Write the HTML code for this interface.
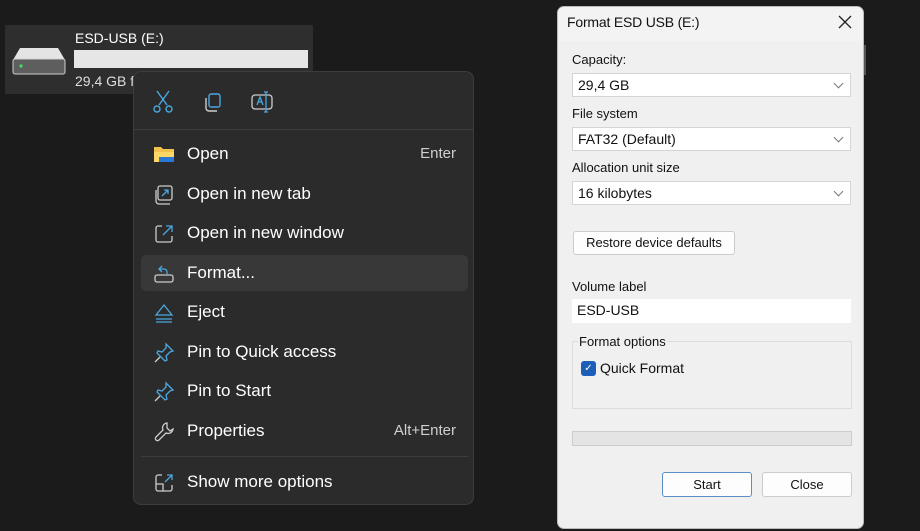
<!DOCTYPE html>
<html><head><meta charset="utf-8"><style>
*{margin:0;padding:0;box-sizing:border-box}
body{width:920px;height:531px;background:#1b1b1b;font-family:"Segoe UI","Liberation Sans",sans-serif;position:relative;overflow:hidden}
.abs{position:absolute}
.tile{left:5px;top:25px;width:308px;height:69px;background:#2e2e2e}
.menu{left:133px;top:71px;width:341px;height:434px;background:#2b2b2b;border:1px solid #3c3c3c;border-radius:8px}
.item{position:absolute;left:7px;width:327px;height:36px;color:#fff;font-size:17px;line-height:36px}
.item .t{position:absolute;left:46px}
.item .k{position:absolute;right:12px;font-size:15px;color:#cfcfcf}
.item svg{position:absolute;left:12px;top:8px}
.dlg{left:557px;top:6px;width:307px;height:523px;background:#f0f0f0;border:1px solid #bbb;border-radius:7px;overflow:hidden;font-size:13px;color:#111}
.lbl{position:absolute;left:14px;font-size:13px}
.sel{position:absolute;left:14px;width:279px;height:24px;background:#fff;border:1px solid #d5d5d5;font-size:14px;line-height:22px;padding-left:5px}
.sel:after{content:"";position:absolute;right:8px;top:6px;width:6px;height:6px;border-right:1px solid #777;border-bottom:1px solid #777;transform:rotate(45deg)}
.btn{position:absolute;background:#fdfdfd;border:1px solid #ccc;border-radius:3px;text-align:center;font-size:13px}
</style></head><body>
<div class="abs tile"></div>
<svg class="abs" style="left:11px;top:46px" width="56" height="32"><path d="M9 2h38l7 12H2z" fill="#e4e4e4"/><rect x="2" y="13" width="52" height="15" rx="2" fill="#5e5e5e" stroke="#cfcfcf"/><circle cx="10" cy="20" r="1.6" fill="#3ce05a"/></svg>
<div class="abs" style="left:75px;top:30px;color:#fff;font-size:14px">ESD-USB (E:)</div>
<div class="abs" style="left:74px;top:50px;width:234px;height:18px;background:#e6e6e6"></div>
<div class="abs" style="left:75px;top:73px;color:#ddd;font-size:14px">29,4 GB f</div>

<div class="abs menu">
<svg class="abs" style="left:18px;top:18px" width="22" height="24" fill="none" stroke="#4aa8e0" stroke-width="1.4"><path d="M5 1l10 14M17 1L7 15"/><circle cx="5" cy="19" r="3"/><circle cx="17" cy="19" r="3"/></svg>
<svg class="abs" style="left:68px;top:20px" width="22" height="22" fill="none" stroke-width="1.4"><rect x="7" y="2" width="11" height="13" rx="2" stroke="#4aa8e0"/><path d="M4 6v10a3 3 0 0 0 3 3h8" stroke="#ccc"/></svg>
<svg class="abs" style="left:116px;top:18px" width="24" height="24" fill="none" stroke-width="1.3"><rect x="2" y="5" width="20" height="14" rx="3" stroke="#ccc"/><path d="M7 15l3-8 3 8M8 12h4" stroke="#4aa8e0"/><path d="M16 2v20M14 2h4M14 22h4" stroke="#4aa8e0"/></svg>
<div class="abs" style="left:0;top:57px;width:339px;height:1px;background:#3d3d3d"></div>
<div class="item" style="top:64px"><svg width="22" height="20"><path d="M1 3h7l2 2h11v13H1z" fill="#f2c14e"/><rect x="1" y="8" width="20" height="10" fill="#fcd667"/><rect x="6" y="13" width="15" height="5" fill="#2a78d6"/></svg><span class="t">Open</span><span class="k">Enter</span></div>
<div class="item" style="top:104px"><svg width="22" height="22" fill="none" stroke-width="1.3"><rect x="5" y="2" width="14" height="14" rx="2" stroke="#ccc"/><path d="M3 6v11a3 3 0 0 0 3 3h11" stroke="#ccc"/><path d="M9 12l6-6M11 6h4v4" stroke="#4aa8e0"/></svg><span class="t">Open in new tab</span></div>
<div class="item" style="top:143px"><svg width="22" height="22" fill="none" stroke-width="1.3"><path d="M9 3H5a2 2 0 0 0-2 2v12a2 2 0 0 0 2 2h12a2 2 0 0 0 2-2v-4" stroke="#ccc"/><path d="M10 12l9-9M13 3h6v6" stroke="#4aa8e0"/></svg><span class="t">Open in new window</span></div>
<div class="item" style="top:183px;background:#383838;border-radius:5px;height:36px"><svg width="22" height="22" fill="none" stroke-width="1.3"><rect x="2" y="12" width="18" height="7" rx="2" stroke="#ccc"/><path d="M9 3l-3 3 3 3M6 6h5a3 3 0 0 1 3 3v3" stroke="#4aa8e0"/></svg><span class="t">Format...</span></div>
<div class="item" style="top:222px"><svg width="22" height="22" fill="none" stroke="#4aa8e0" stroke-width="1.3"><path d="M11 3l8 10H3z"/><path d="M3 17h16M3 20h16"/></svg><span class="t">Eject</span></div>
<div class="item" style="top:262px"><svg width="22" height="22" fill="none" stroke-width="1.3"><path d="M13 2l7 7-3 1-4 4 1 4-2 1-8-8 1-2 4 1 4-4z" stroke="#4aa8e0"/><path d="M7 15l-5 5" stroke="#ccc"/></svg><span class="t">Pin to Quick access</span></div>
<div class="item" style="top:301px"><svg width="22" height="22" fill="none" stroke-width="1.3"><path d="M13 2l7 7-3 1-4 4 1 4-2 1-8-8 1-2 4 1 4-4z" stroke="#4aa8e0"/><path d="M7 15l-5 5" stroke="#ccc"/></svg><span class="t">Pin to Start</span></div>
<div class="item" style="top:341px"><svg width="22" height="22" fill="none" stroke="#ccc" stroke-width="1.3"><path d="M14 2a5 5 0 0 0-4 7l-7 7a2 2 0 0 0 3 3l7-7a5 5 0 0 0 7-4l-3 2-3-3z"/></svg><span class="t">Properties</span><span class="k">Alt+Enter</span></div>
<div class="abs" style="left:7px;top:384px;width:327px;height:1px;background:#3d3d3d"></div>
<div class="item" style="top:392px"><svg width="22" height="22" fill="none" stroke-width="1.3"><path d="M9 3H5a2 2 0 0 0-2 2v12a2 2 0 0 0 2 2h12a2 2 0 0 0 2-2v-4M3 12h7v7" stroke="#ccc"/><path d="M12 10l7-7M14 3h5v5" stroke="#4aa8e0"/></svg><span class="t">Show more options</span></div>
</div>

<div class="abs" style="left:863px;top:45px;width:3px;height:30px;background:#555"></div>
<div class="abs dlg">
<div class="abs" style="left:0;top:0;width:307px;height:34px;background:#f3f3f3"></div>
<div class="abs" style="left:9px;top:7px;font-size:14px;letter-spacing:-0.2px">Format ESD USB (E:)</div>
<svg class="abs" style="left:280px;top:8px" width="14" height="14" stroke="#222" stroke-width="1.3"><path d="M1 1l12 12M13 1L1 13"/></svg>
<div class="lbl" style="top:45px">Capacity:</div>
<div class="sel" style="top:66px">29,4 GB</div>
<div class="lbl" style="top:99px">File system</div>
<div class="sel" style="top:120px">FAT32 (Default)</div>
<div class="lbl" style="top:153px">Allocation unit size</div>
<div class="sel" style="top:174px">16 kilobytes</div>
<div class="btn" style="left:15px;top:224px;width:162px;height:24px;line-height:22px">Restore device defaults</div>
<div class="lbl" style="top:272px">Volume label</div>
<div class="abs" style="left:14px;top:292px;width:279px;height:24px;background:#fff;font-size:14px;line-height:22px;padding-left:5px">ESD-USB</div>
<div class="abs" style="left:14px;top:334px;width:280px;height:68px;border:1px solid #dcdcdc"></div>
<div class="abs" style="left:20px;top:327px;background:#f0f0f0;padding:0 1px">Format options</div>
<div class="abs" style="left:23px;top:354px;width:15px;height:15px;background:#1b5fb8;border-radius:3px;color:#fff;font-size:10px;text-align:center;line-height:15px">✓</div>
<div class="abs" style="left:42px;top:353px;font-size:14px">Quick Format</div>
<div class="abs" style="left:14px;top:424px;width:280px;height:15px;background:#e4e4e4;border:1px solid #ccc"></div>
<div class="btn" style="left:104px;top:465px;width:90px;height:25px;line-height:23px;border-color:#5b8fc7">Start</div>
<div class="btn" style="left:204px;top:465px;width:90px;height:25px;line-height:23px">Close</div>
</div>
</body></html>
